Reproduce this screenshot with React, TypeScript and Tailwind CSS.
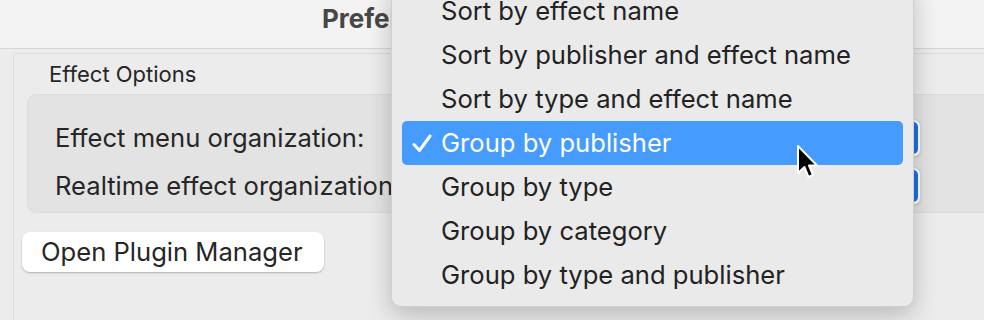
import React from "react";

const items = [
  "Sort by effect name",
  "Sort by publisher and effect name",
  "Sort by type and effect name",
  "Group by publisher",
  "Group by type",
  "Group by category",
  "Group by type and publisher",
];

function Popup() {
  return (
    <div className="ml-auto mr-[63px] w-[330px] h-[38px] rounded-[7px] bg-white border border-[#d6d6d6] shadow-sm flex justify-end p-[2px] shrink-0">
      <div className="w-[22px] h-full rounded-[5px] bg-[#1f6fe5]" />
    </div>
  );
}

export default function App() {
  return (
    <div
      className="relative w-[984px] h-[320px] overflow-hidden bg-[#ececec] text-[#262626]"
      style={{ fontFamily: "Inter, 'Noto Sans', sans-serif" }}
    >
      <div className="h-[49px] bg-[#f2f3f2] border-b border-[#d6d6d6] pl-[322px] pt-[6px]">
        <span className="block text-[26px] leading-[26px] font-bold text-[#474747] whitespace-nowrap">
          Preferences: Effects
        </span>
      </div>
      <div className="pl-[13px] pt-[4px]">
        <div className="border-l border-t border-[#dcdcdc] rounded-tl-[3px] h-[300px]">
          <div className="h-[40px] pl-[35px] flex items-center text-[22px]">Effect Options</div>
          <div className="ml-[13px] h-[119px] bg-[#e3e3e3] border-l border-t border-b border-[#dcdcdc] rounded-l-[9px] flex flex-col pt-[24px] gap-[10px]">
            <div className="flex items-center h-[38px] pl-[27px] text-[25.6px] whitespace-nowrap">
              <span>Effect menu organization:</span>
              <Popup />
            </div>
            <div className="flex items-center h-[38px] pl-[27px] text-[25.6px] whitespace-nowrap">
              <span>Realtime effect organization:</span>
              <Popup />
            </div>
          </div>
          <div className="pl-[8px] pt-[19px]">
            <button className="w-[302px] h-[40px] rounded-[8px] bg-white shadow-[0_1px_2px_rgba(0,0,0,0.25)] text-left pl-[19px] text-[25.6px] leading-[40px] text-[#262626] whitespace-nowrap">
              Open Plugin Manager
            </button>
          </div>
        </div>
      </div>

      {/* Dropdown menu overlay */}
      <div className="absolute left-[391px] top-[-18px] w-[523px] rounded-[10px] bg-[#e9eae9] border border-[#cfcfcf] shadow-[0_8px_24px_rgba(0,0,0,0.22)] pt-[6px] pb-[9px] px-[10px]">
        {items.map((t, i) => {
          const sel = i === 3;
          return (
            <div
              key={t}
              className={
                sel
                  ? "h-[44px] rounded-[5px] bg-[#459bfe] text-white flex items-center text-[25.6px] whitespace-nowrap"
                  : "h-[44px] flex items-center text-[25.6px] text-[#222222] whitespace-nowrap"
              }
            >
              <span className="w-[39px] h-full flex items-center pl-[10px] shrink-0">
                {sel ? (
                  <svg width="20" height="19" viewBox="0 0 20 19">
                    <path
                      d="M2 10.5 L7.5 16.5 L18 2"
                      fill="none"
                      stroke="#fff"
                      strokeWidth="3"
                      strokeLinecap="round"
                      strokeLinejoin="round"
                    />
                  </svg>
                ) : null}
              </span>
              <span>{t}</span>
            </div>
          );
        })}
      </div>

      {/* Cursor */}
      <svg className="absolute left-[795px] top-[144px]" width="28" height="38" viewBox="0 0 28 38">
        <path
          d="M3 2 L3 29 L9.5 23 L13.5 33 L18 31 L14 21.5 L22 21.5 Z"
          fill="#000"
          stroke="#fff"
          strokeWidth="2"
          strokeLinejoin="round"
        />
      </svg>
    </div>
  );
}
